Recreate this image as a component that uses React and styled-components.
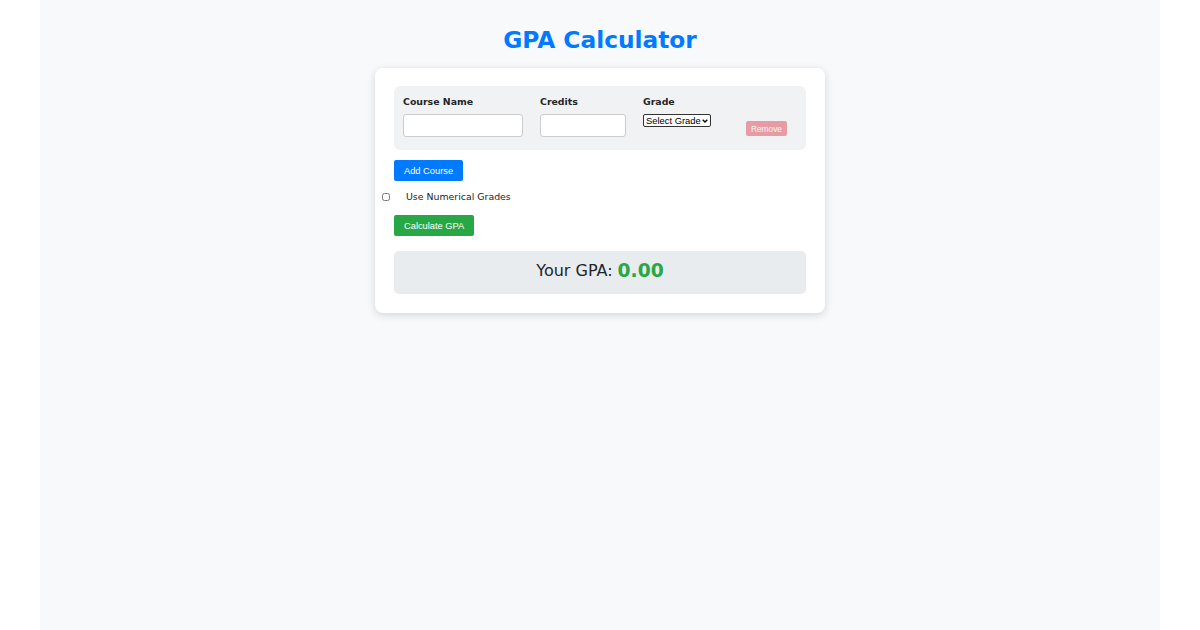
import React, { useState } from "react";
import styled, { createGlobalStyle } from "styled-components";

const GlobalStyle = createGlobalStyle`
  html, body {
    margin: 0;
    padding: 0;
    background: #ffffff;
  }
  body {
    font-family: "DejaVu Sans", sans-serif;
    color: #212529;
  }
`;

const Page = styled.div`
  width: 1120px;
  min-height: 630px;
  margin: 0 auto;
  background: #f8f9fa;
  display: flex;
  flex-direction: column;
  align-items: center;
  padding-top: 26px;
  box-sizing: border-box;
`;

const Title = styled.h1`
  margin: 0 0 14px;
  font-size: 23.3px;
  line-height: 28px;
  font-weight: bold;
  color: #007bff;
`;

const Card = styled.div`
  width: 450px;
  box-sizing: border-box;
  background: #fff;
  border-radius: 8px;
  box-shadow: 0 2px 8px rgba(0, 0, 0, 0.15);
  padding: 18px 19px 19px;
  display: flex;
  flex-direction: column;
  align-items: flex-start;
`;

const CourseRow = styled.div`
  align-self: stretch;
  display: flex;
  align-items: flex-start;
  background: #f1f2f4;
  border-radius: 6px;
  padding: 10px 9px 13px;
  margin-bottom: 10px;
`;

const Field = styled.div`
  display: flex;
  flex-direction: column;
  align-items: flex-start;
  width: ${(p) => p.$width}px;
  margin-right: ${(p) => p.$gap}px;
`;

const Label = styled.label`
  font-size: 9.4px;
  font-weight: bold;
  line-height: 12px;
  margin-bottom: 6px;
`;

const TextInput = styled.input`
  width: 100%;
  height: 23px;
  box-sizing: border-box;
  border: 1px solid #ccc;
  border-radius: 3px;
  background: #fff;
  padding: 0 5px;
  margin: 0;
`;

const SelectWrap = styled.div`
  position: relative;
  display: inline-flex;
`;

const GradeSelect = styled.select`
  appearance: none;
  -webkit-appearance: none;
  width: 68px;
  height: 13px;
  box-sizing: border-box;
  font-family: "Liberation Sans", Arial, sans-serif;
  font-size: 9.4px;
  line-height: 11px;
  padding: 0 0 0 2px;
  margin: 0;
  border: 1px solid #333;
  border-radius: 2px;
  background: #fff;
  color: #000;
`;

const Chevron = styled.svg`
  position: absolute;
  right: 3px;
  top: 5px;
  width: 6px;
  height: 4px;
  pointer-events: none;
`;

const Button = styled.button`
  display: block;
  font-family: "Liberation Sans", Arial, sans-serif;
  font-size: ${(p) => (p.$small ? "8.3px" : "9.3px")};
  color: #fff;
  background: ${(p) => p.$bg};
  opacity: ${(p) => (p.disabled ? 0.45 : 1)};
  border: none;
  border-radius: 2px;
  height: ${(p) => (p.$small ? 15 : 21)}px;
  padding: 0 ${(p) => (p.$small ? 5 : 10)}px;
  margin: 0;
  cursor: pointer;
`;

const RemoveWrap = styled.div`
  display: flex;
  padding-top: 25px;
  margin-left: 35px;
`;

const CheckRow = styled.label`
  display: flex;
  align-items: center;
  margin: 10px 0 12px -12px;
  font-size: 9.4px;
  line-height: 12px;
`;

const Check = styled.input`
  width: 8px;
  height: 8px;
  margin: 0 16px 0 0;
`;

const Result = styled.div`
  align-self: stretch;
  margin-top: 15px;
  background: #e9ecef;
  border-radius: 5px;
  height: 43px;
  display: flex;
  align-items: center;
  justify-content: center;
  font-size: 16px;
  padding-bottom: 4px;
  box-sizing: border-box;
`;

const Gpa = styled.span`
  color: #28a745;
  font-weight: bold;
  font-size: 18.7px;
  margin-left: 5px;
`;

export default function App() {
  const [numeric, setNumeric] = useState(false);
  return (
    <>
      <GlobalStyle />
      <Page>
        <Title>GPA Calculator</Title>
        <Card>
          <CourseRow>
            <Field $width={120} $gap={17}>
              <Label>Course Name</Label>
              <TextInput type="text" />
            </Field>
            <Field $width={86} $gap={17}>
              <Label>Credits</Label>
              <TextInput type="number" />
            </Field>
            <Field $width={68} $gap={0}>
              <Label>Grade</Label>
              <SelectWrap>
                <GradeSelect>
                  <option>Select Grade</option>
                  <option>A</option>
                  <option>B</option>
                  <option>C</option>
                  <option>D</option>
                  <option>F</option>
                </GradeSelect>
                <Chevron viewBox="0 0 6 4">
                  <path
                    d="M0.7 0.7 L3 3 L5.3 0.7"
                    fill="none"
                    stroke="#000"
                    strokeWidth="1.3"
                  />
                </Chevron>
              </SelectWrap>
            </Field>
            <RemoveWrap>
              <Button $bg="#dc3545" $small disabled>
                Remove
              </Button>
            </RemoveWrap>
          </CourseRow>
          <Button $bg="#007bff">Add Course</Button>
          <CheckRow>
            <Check
              type="checkbox"
              checked={numeric}
              onChange={(e) => setNumeric(e.target.checked)}
            />
            Use Numerical Grades
          </CheckRow>
          <Button $bg="#28a745">Calculate GPA</Button>
          <Result>
            Your GPA:<Gpa>0.00</Gpa>
          </Result>
        </Card>
      </Page>
    </>
  );
}
